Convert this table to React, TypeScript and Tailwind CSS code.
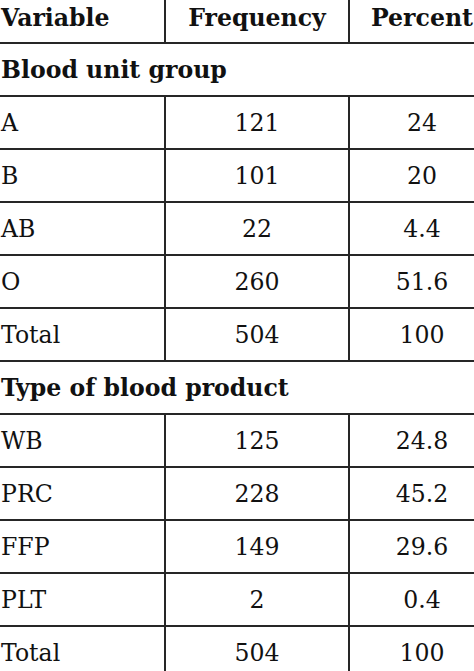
import React from "react";

type Row =
  | { kind: "section"; label: string }
  | { kind: "data"; v: string; f: string; p: string };

const rows: Row[] = [
  { kind: "section", label: "Blood unit group" },
  { kind: "data", v: "A", f: "121", p: "24" },
  { kind: "data", v: "B", f: "101", p: "20" },
  { kind: "data", v: "AB", f: "22", p: "4.4" },
  { kind: "data", v: "O", f: "260", p: "51.6" },
  { kind: "data", v: "Total", f: "504", p: "100" },
  { kind: "section", label: "Type of blood product" },
  { kind: "data", v: "WB", f: "125", p: "24.8" },
  { kind: "data", v: "PRC", f: "228", p: "45.2" },
  { kind: "data", v: "FFP", f: "149", p: "29.6" },
  { kind: "data", v: "PLT", f: "2", p: "0.4" },
  { kind: "data", v: "Total", f: "504", p: "100" },
];

export default function App() {
  return (
    <div
      className="w-[474px] h-[671px] overflow-hidden bg-white text-[#111111]"
      style={{ fontFamily: '"DejaVu Serif", serif' }}
    >
      <div className="w-[494px] -mt-[9px] text-[23.6px] leading-none">
        <div className="flex h-[53px] border-b-2 border-[#262626] font-bold">
          <div className="w-[166px] border-r-2 border-[#262626] flex items-center pl-[1px] pt-[5px]">
            Variable
          </div>
          <div className="w-[184px] border-r-2 border-[#262626] flex items-center justify-center pt-[5px]">
            Frequency
          </div>
          <div className="flex-1 flex items-center justify-center pt-[5px]">Percent</div>
        </div>
        {rows.map((r, i) =>
          r.kind === "section" ? (
            <div
              key={i}
              className="flex h-[53px] border-b-2 border-[#262626] font-bold items-center pl-[1px] pt-[2px]"
            >
              {r.label}
            </div>
          ) : (
            <div key={i} className="flex h-[53px] border-b-2 border-[#262626]">
              <div className="w-[166px] border-r-2 border-[#262626] flex items-center pl-[1px] pt-[3px]">
                {r.v}
              </div>
              <div className="w-[184px] border-r-2 border-[#262626] flex items-center justify-center pt-[3px]">
                {r.f}
              </div>
              <div className="flex-1 flex items-center justify-center pt-[3px]">{r.p}</div>
            </div>
          )
        )}
      </div>
    </div>
  );
}
